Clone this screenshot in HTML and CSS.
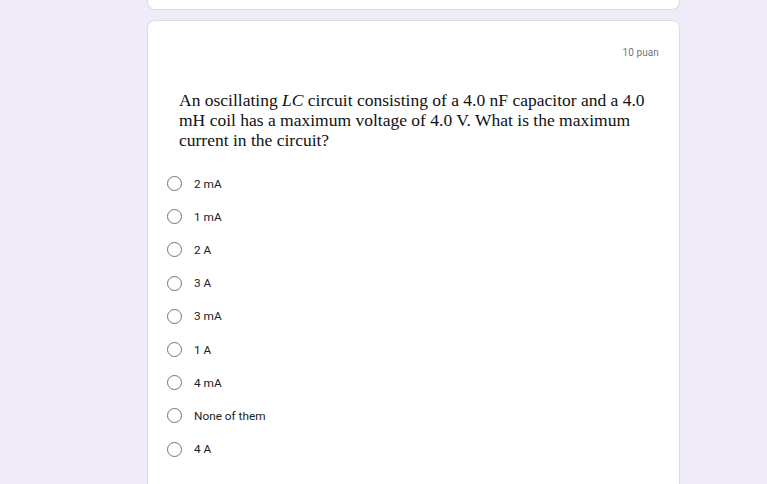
FILE: index.html
```html
<!DOCTYPE html>
<html lang="tr">
<head>
    <meta charset="UTF-8">
    <meta name="viewport" content="width=device-width, initial-scale=1.0">
    <title>Soru</title>
    <link rel="stylesheet" href="styles.css">
</head>
<body>

    <div class="page">
        <div class="card card-prev"></div>

        <div class="card question">
            <div class="points">10 puan</div>
            <div class="question-text">
                An oscillating <i>LC</i> circuit consisting of a 4.0 nF capacitor and a 4.0
                mH coil has a maximum voltage of 4.0 V. What is the maximum
                current in the circuit?
            </div>

            <div class="options">
                <label class="option"><span class="radio"></span>2 mA</label>
                <label class="option"><span class="radio"></span>1 mA</label>
                <label class="option"><span class="radio"></span>2 A</label>
                <label class="option"><span class="radio"></span>3 A</label>
                <label class="option"><span class="radio"></span>3 mA</label>
                <label class="option"><span class="radio"></span>1 A</label>
                <label class="option"><span class="radio"></span>4 mA</label>
                <label class="option"><span class="radio"></span>None of them</label>
                <label class="option"><span class="radio"></span>4 A</label>
            </div>
        </div>
    </div>

</body>
</html>
```

FILE: styles.css
```css
body {
    margin: 0;
    background: #f0ebf8;
    font-family: Roboto, Arial, sans-serif;
    color: #202124;
    overflow: hidden;
}
.page {
    width: 533px;
    margin-left: 147px;
}
.card {
    background: #fff;
    border: 1px solid #dadce0;
    border-radius: 8px;
    box-sizing: border-box;
}
.card-prev {
    height: 10px;
    border-top: none;
    border-radius: 0 0 8px 8px;
    margin-bottom: 10px;
}
.question {
    padding: 26px 20px 30px 31px;
}
.points {
    text-align: right;
    font-size: 10px;
    color: #70757a;
    letter-spacing: 0.1px;
}
.question-text {
    font-family: "Liberation Serif", "Times New Roman", serif;
    font-size: 17.5px;
    line-height: 20px;
    color: #111;
    margin-top: 32px;
    width: 480px;
}
.options {
    margin-top: 17px;
    margin-left: -12px;
}
.option {
    display: flex;
    align-items: center;
    height: 33.2px;
    font-size: 11.8px;
    color: #202124;
}
.radio {
    width: 13px;
    height: 13px;
    border: 1.5px solid #6f7276;
    border-radius: 50%;
    margin-right: 12px;
    flex: none;
}
```
